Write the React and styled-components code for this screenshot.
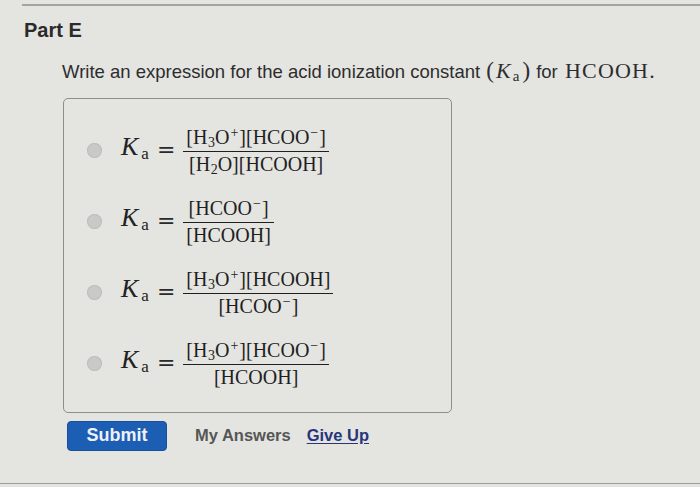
import React from 'react';
import styled, { createGlobalStyle } from 'styled-components';

const GlobalStyle = createGlobalStyle`
  html, body {
    margin: 0;
    padding: 0;
    background: #e4e4e1;
  }
  body {
    font-family: "Liberation Sans", Arial, sans-serif;
    color: #2a2a2a;
  }
`;

const options = [
  { num: ['H3O+', 'HCOO-'], den: ['H2O', 'HCOOH'] },
  { num: ['HCOO-'], den: ['HCOOH'] },
  { num: ['H3O+', 'HCOOH'], den: ['HCOO-'] },
  { num: ['H3O+', 'HCOO-'], den: ['HCOOH'] },
];

// turns "H3O+" into H<sub>3</sub>O<sup>+</sup>
const Species = ({ formula }) => {
  const parts = [];
  formula.split('').forEach((ch, i) => {
    if (/[0-9]/.test(ch)) parts.push(<Sub key={i}>{ch}</Sub>);
    else if (ch === '+') parts.push(<Sup key={i}>+</Sup>);
    else if (ch === '-') parts.push(<Sup key={i}>−</Sup>);
    else parts.push(ch);
  });
  return <>[{parts}]</>;
};

const App = () => {
  return (
    <Page>
      <GlobalStyle />
      <TopRule />
      <Title>Part E</Title>
      <Question>
        Write an expression for the acid ionization constant{' '}
        <Paren>(</Paren>
        <QK>K</QK>
        <QSub>a</QSub>
        <Paren>)</Paren> for <Formula>HCOOH.</Formula>
      </Question>

      <AnswerBox>
        {options.map((opt, i) => (
          <Option key={i}>
            <Radio />
            <Ka>
              <K>K</K>
              <KSub>a</KSub>
            </Ka>
            <Equals>=</Equals>
            <Frac>
              <Num>
                {opt.num.map((f) => <Species key={f} formula={f} />)}
              </Num>
              <Den>
                {opt.den.map((f) => <Species key={f} formula={f} />)}
              </Den>
            </Frac>
          </Option>
        ))}
      </AnswerBox>

      <Actions>
        <SubmitButton>Submit</SubmitButton>
        <MyAnswers>My Answers</MyAnswers>
        <GiveUp href="#">Give Up</GiveUp>
      </Actions>
      <BottomRule />
    </Page>
  );
};

const Page = styled.div`
  width: 700px;
  height: 487px;
  display: flex;
  flex-direction: column;
  overflow: hidden;
`;

const TopRule = styled.div`
  margin: 4px 0 0 22px;
  height: 2px;
  background: #a4a4a2;
`;

const Title = styled.h2`
  margin: 11.5px 0 0 24px;
  font-size: 20px;
  line-height: 24px;
  font-weight: bold;
  color: #2b2b2b;
`;

const Question = styled.p`
  margin: 17px 0 0 62px;
  font-size: 18.5px;
  line-height: 24px;
  color: #2d2d2d;
  white-space: nowrap;
`;

const Paren = styled.span`
  font-family: "Liberation Serif", "Times New Roman", serif;
  font-size: 23px;
  margin: 0 1px;
`;

const QK = styled.span`
  font-family: "Liberation Serif", "Times New Roman", serif;
  font-style: italic;
  font-size: 22px;
  letter-spacing: 1px;
  margin-left: 1px;
`;

const QSub = styled.span`
  font-family: "Liberation Serif", "Times New Roman", serif;
  font-size: 15px;
  vertical-align: -3px;
  line-height: 0;
  margin: 0 2px 0 1px;
`;

const Formula = styled.span`
  font-family: "Liberation Serif", "Times New Roman", serif;
  font-size: 22px;
  letter-spacing: 1.2px;
  margin-left: 2px;
`;

const AnswerBox = styled.div`
  margin: 14px 0 0 63px;
  width: 389px;
  box-sizing: border-box;
  border: 1.5px solid #8e8e8c;
  border-radius: 5px;
  padding: 16px 0 13px 23px;
`;

const Option = styled.div`
  height: 71px;
  display: flex;
  align-items: center;
`;

const Radio = styled.span`
  width: 15px;
  height: 15px;
  border-radius: 50%;
  background: #c9c9c7;
  box-shadow: inset 0 0 0 1px #bebebc;
  margin-right: 19px;
  flex-shrink: 0;
`;

const Ka = styled.span`
  font-family: "Liberation Serif", "Times New Roman", serif;
  color: #222;
  line-height: 24px;
  margin-top: -4px;
  white-space: nowrap;
`;

const K = styled.span`
  font-style: italic;
  font-size: 26px;
  letter-spacing: 2px;
`;

const KSub = styled.span`
  font-size: 17px;
  vertical-align: -4px;
  line-height: 0;
  margin-left: 1px;
`;

const Equals = styled.span`
  font-family: "DejaVu Sans", sans-serif;
  font-size: 22px;
  line-height: 24px;
  color: #2a2a2a;
  margin: 0 8px 0 8px;
`;

const Frac = styled.span`
  display: inline-flex;
  flex-direction: column;
  font-family: "Liberation Serif", "Times New Roman", serif;
  font-size: 20px;
  line-height: 22px;
  color: #1f1f1f;
  white-space: nowrap;
`;

const Num = styled.span`
  text-align: center;
  padding: 0 3px 3px;
`;

const Den = styled.span`
  text-align: center;
  padding: 1px 3px 0;
  border-top: 1.6px solid #1f1f1f;
`;

const Sub = styled.span`
  font-size: 0.7em;
  vertical-align: -0.28em;
  line-height: 0;
  margin-left: 0.5px;
`;

const Sup = styled.span`
  font-size: 0.7em;
  vertical-align: 0.45em;
  line-height: 0;
  margin: 0 1px;
`;

const Actions = styled.div`
  margin: 8px 0 0 67px;
  display: flex;
  align-items: center;
`;

const SubmitButton = styled.button`
  width: 100px;
  height: 30px;
  padding: 0;
  background: #1d5eb5;
  border: 1px solid #174f9d;
  border-radius: 4px;
  color: #eef1f6;
  font-family: "Liberation Sans", Arial, sans-serif;
  font-size: 18px;
  font-weight: bold;
  cursor: pointer;
`;

const MyAnswers = styled.span`
  margin-left: 28px;
  font-size: 16.5px;
  font-weight: bold;
  color: #565656;
`;

const GiveUp = styled.a`
  margin-left: 16px;
  font-size: 16.5px;
  font-weight: bold;
  color: #27367a;
  text-decoration: underline;
  text-underline-offset: 2px;
`;

const BottomRule = styled.div`
  margin-top: auto;
  margin-bottom: 3px;
  height: 1.5px;
  background: #9c9c9a;
`;

export default App;
